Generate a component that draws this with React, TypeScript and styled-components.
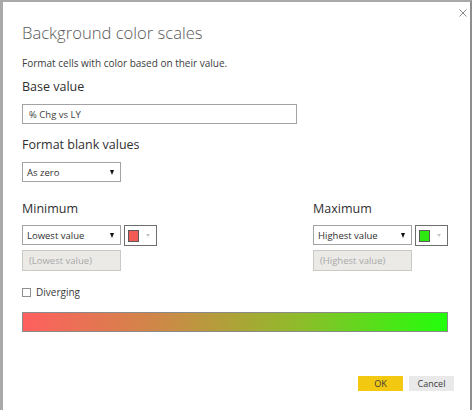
import * as React from 'react'
import styled, { createGlobalStyle } from 'styled-components'

const GlobalStyle = createGlobalStyle`
  html, body {
    margin: 0;
    padding: 0;
    background: #ffffff;
  }
  body {
    font-family: "Open Sans", "Noto Sans", sans-serif;
  }
`

const S = {
  Dialog: styled.div`
    box-sizing: border-box;
    width: 472px;
    height: 410px;
    display: flex;
    flex-direction: column;
    background: #ffffff;
    border-left: 3px solid #a9a9a9;
    border-top: 2px solid #a9a9a9;
    border-right: 2px solid #8e8e8e;
  `,
  Header: styled.div`
    display: flex;
    justify-content: space-between;
    align-items: flex-start;
    padding: 0 3px 0 19px;
  `,
  Title: styled.h1`
    margin: 21px 0 0;
    font-size: 16.6px;
    line-height: 20px;
    font-weight: 300;
    color: #595959;
  `,
  Close: styled.button`
    margin-top: 7px;
    padding: 0;
    border: none;
    background: none;
    width: 8px;
    height: 8px;
    display: flex;
    cursor: pointer;
  `,
  Body: styled.div`
    display: flex;
    flex-direction: column;
    padding: 0 22px 0 19px;
  `,
  Description: styled.p`
    margin: 13px 0 0;
    font-size: 10px;
    line-height: 14px;
    color: #3c3c3c;
  `,
  Label: styled.h2<{ $gap?: number }>`
    margin: ${p => p.$gap ?? 13}px 0 0;
    font-size: 12.5px;
    line-height: 16px;
    font-weight: 400;
    color: #2f2f2f;
  `,
  TextInput: styled.div<{ $width: number; $disabled?: boolean }>`
    box-sizing: border-box;
    width: ${p => p.$width}px;
    height: ${p => (p.$disabled ? 21 : 20)}px;
    margin-top: ${p => (p.$disabled ? 4 : 9)}px;
    padding: 0 6px;
    display: flex;
    align-items: center;
    font-size: 9.5px;
    color: ${p => (p.$disabled ? '#a9a9a9' : '#404040')};
    background: ${p => (p.$disabled ? '#ebeae7' : '#ffffff')};
    border: 1px solid ${p => (p.$disabled ? '#c9c9c6' : '#a3a3a3')};
  `,
  Select: styled.div`
    box-sizing: border-box;
    width: 99px;
    height: 20px;
    padding: 0 6px 0 4px;
    display: flex;
    align-items: center;
    justify-content: space-between;
    font-size: 9.5px;
    color: #303030;
    background: #ffffff;
    border: 1px solid #a3a3a3;
  `,
  SelectWrap: styled.div`
    margin-top: 9px;
  `,
  Caret: styled.span<{ $light?: boolean }>`
    width: 0;
    height: 0;
    border-left: 2.5px solid transparent;
    border-right: 2.5px solid transparent;
    border-top: ${p => (p.$light ? 3 : 5)}px solid ${p => (p.$light ? '#c4c4c4' : '#111111')};
  `,
  Columns: styled.div`
    display: flex;
    justify-content: space-between;
    margin-top: 19px;
  `,
  Column: styled.div`
    display: flex;
    flex-direction: column;
    width: 135px;
  `,
  PickerRow: styled.div`
    display: flex;
    gap: 3px;
    margin-top: 8px;
  `,
  ColorButton: styled.div`
    box-sizing: border-box;
    width: 33px;
    height: 21px;
    padding: 0 6px 0 3px;
    display: flex;
    align-items: center;
    justify-content: space-between;
    border: 1px solid #6e6e6e;
    background: #ffffff;
  `,
  Swatch: styled.span<{ $color: string }>`
    box-sizing: border-box;
    width: 11px;
    height: 12px;
    background: ${p => p.$color};
    border: 1px solid #5a5a5a;
  `,
  CheckRow: styled.label`
    display: flex;
    align-items: center;
    gap: 5px;
    margin-top: 15px;
    font-size: 10px;
    line-height: 12px;
    color: #3a3a3a;
  `,
  CheckBox: styled.span`
    box-sizing: border-box;
    width: 9px;
    height: 9px;
    border: 1px solid #8f8f8f;
    background: #ffffff;
  `,
  Gradient: styled.div`
    box-sizing: border-box;
    margin-top: 14px;
    height: 20px;
    border: 1px solid #8a8a8a;
    background: linear-gradient(to right, #ff5f5f 0%, #c98c45 35%, #8fbb2a 65%, #22ff0c 100%);
  `,
  Footer: styled.div`
    margin-top: auto;
    display: flex;
    justify-content: flex-end;
    gap: 6px;
    padding: 0 16px 19px 0;
  `,
  Button: styled.button<{ $primary?: boolean }>`
    width: 45px;
    height: 15px;
    padding: 0;
    border: none;
    font-family: inherit;
    font-size: 9px;
    color: #3a3a3a;
    background: ${p => (p.$primary ? '#f2c811' : '#e9e9e9')};
    cursor: pointer;
  `,
}

function ColorPicker({ color }: { color: string }) {
  return (
    <S.ColorButton>
      <S.Swatch $color={color} />
      <S.Caret $light />
    </S.ColorButton>
  )
}

function ScaleColumn({ label, value, color }: { label: string; value: string; color: string }) {
  return (
    <S.Column>
      <S.Label $gap={0}>{label}</S.Label>
      <S.PickerRow>
        <S.Select>
          <span>{value}</span>
          <S.Caret />
        </S.Select>
        <ColorPicker color={color} />
      </S.PickerRow>
      <S.TextInput $width={99} $disabled>({value})</S.TextInput>
    </S.Column>
  )
}

export default function App() {
  return (
    <>
      <GlobalStyle />
      <S.Dialog>
        <S.Header>
          <S.Title>Background color scales</S.Title>
          <S.Close aria-label="Close">
            <svg width="8" height="8" viewBox="0 0 8 8">
              <path d="M0.5 0.5 L7.5 7.5 M7.5 0.5 L0.5 7.5" stroke="#7a7a7a" strokeWidth="0.9" />
            </svg>
          </S.Close>
        </S.Header>
        <S.Body>
          <S.Description>Format cells with color based on their value.</S.Description>
          <S.Label $gap={9}>Base value</S.Label>
          <S.TextInput $width={275}>% Chg vs LY</S.TextInput>
          <S.Label>Format blank values</S.Label>
          <S.SelectWrap>
            <S.Select>
              <span>As zero</span>
              <S.Caret />
            </S.Select>
          </S.SelectWrap>
          <S.Columns>
            <ScaleColumn label="Minimum" value="Lowest value" color="#f25a55" />
            <ScaleColumn label="Maximum" value="Highest value" color="#2ee812" />
          </S.Columns>
          <S.CheckRow>
            <S.CheckBox />
            Diverging
          </S.CheckRow>
          <S.Gradient />
        </S.Body>
        <S.Footer>
          <S.Button $primary>OK</S.Button>
          <S.Button>Cancel</S.Button>
        </S.Footer>
      </S.Dialog>
    </>
  )
}
